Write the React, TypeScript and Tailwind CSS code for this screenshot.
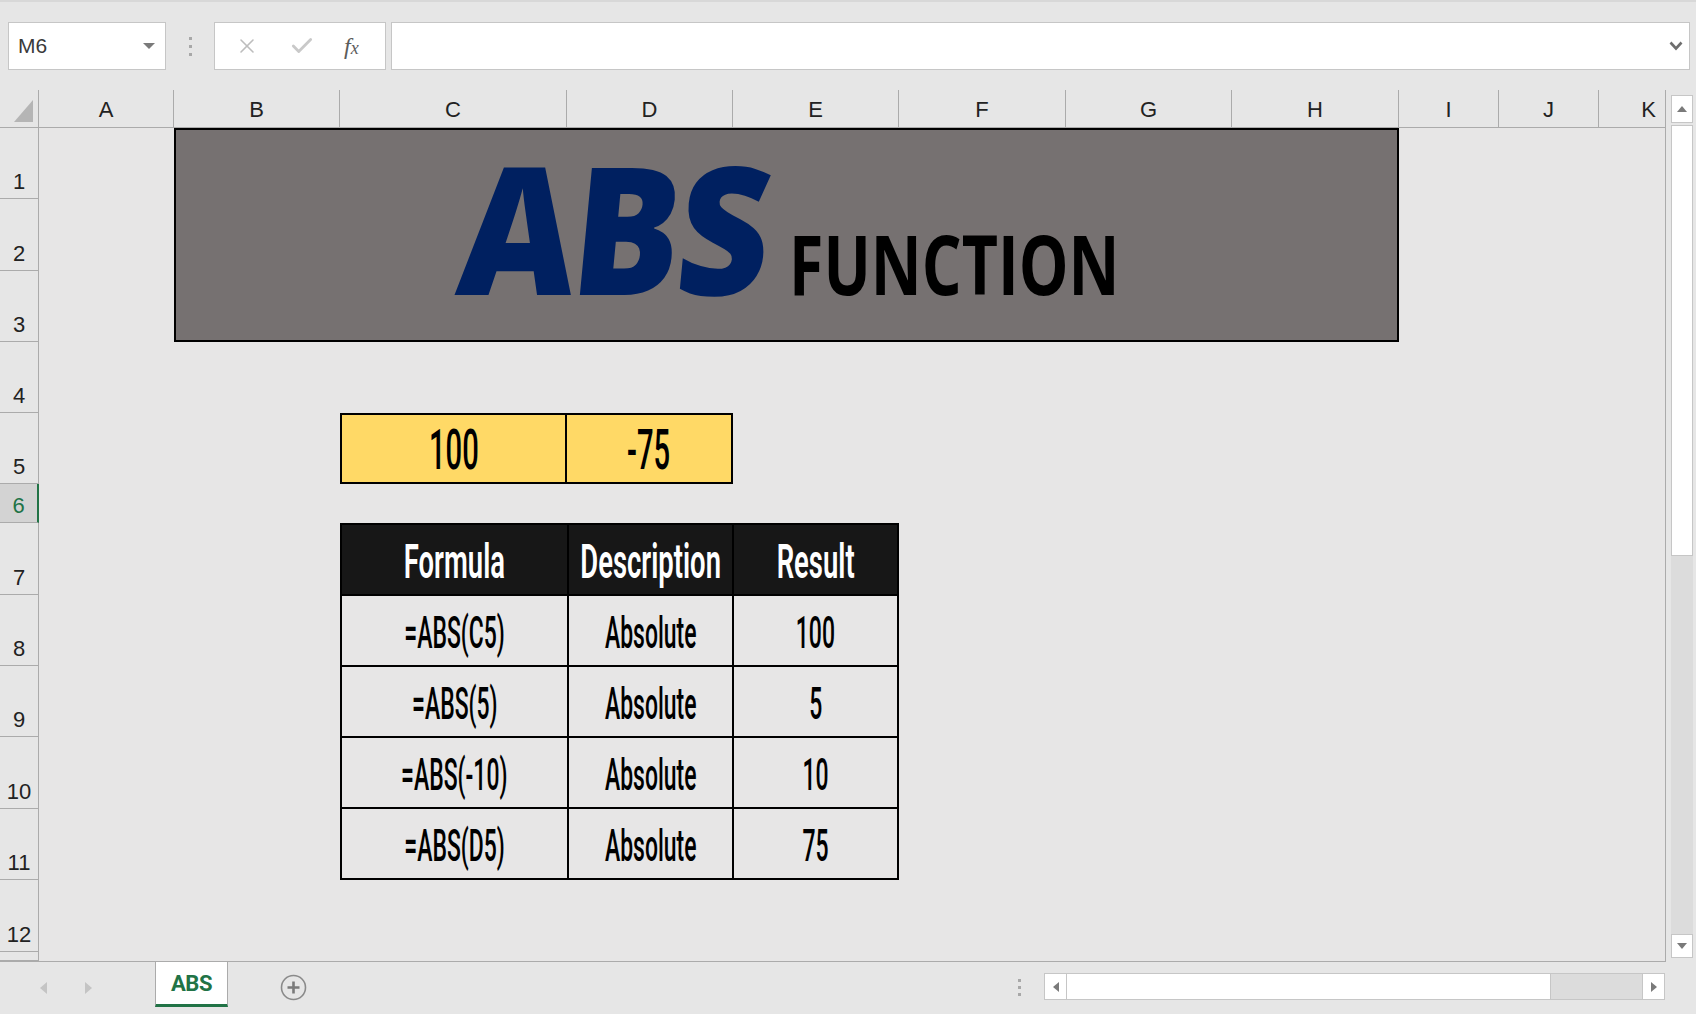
import { X, Check } from "lucide-react";

const COLUMNS = [
  { label: "A", width: "w-[135px]" },
  { label: "B", width: "w-[166px]" },
  { label: "C", width: "w-[227px]" },
  { label: "D", width: "w-[166px]" },
  { label: "E", width: "w-[166px]" },
  { label: "F", width: "w-[167px]" },
  { label: "G", width: "w-[166px]" },
  { label: "H", width: "w-[167px]" },
  { label: "I", width: "w-[100px]" },
  { label: "J", width: "w-[100px]" },
  { label: "K", width: "w-[100px]" },
];

const ROWS = [
  { n: "1", h: "h-[71px]" },
  { n: "2", h: "h-[72px]" },
  { n: "3", h: "h-[71px]" },
  { n: "4", h: "h-[71px]" },
  { n: "5", h: "h-[71px]" },
  { n: "6", h: "h-[39px]", selected: true },
  { n: "7", h: "h-[72px]" },
  { n: "8", h: "h-[71px]" },
  { n: "9", h: "h-[71px]" },
  { n: "10", h: "h-[72px]" },
  { n: "11", h: "h-[71px]" },
  { n: "12", h: "h-[72px]" },
  { n: "", h: "h-[9px]" },
];

const TABLE = [
  ["=ABS(C5)", "Absolute", "100"],
  ["=ABS(5)", "Absolute", "5"],
  ["=ABS(-10)", "Absolute", "10"],
  ["=ABS(D5)", "Absolute", "75"],
];

function Condensed({ children, size }: { children: React.ReactNode; size: "head" | "body" | "big" }) {
  const cls =
    size === "head"
      ? "text-[49px] scale-x-[0.56] font-semibold"
      : size === "big"
      ? "text-[55px] scale-x-[0.53] font-medium"
      : "text-[45px] scale-x-[0.51] font-medium";
  return (
    <span className={`inline-block whitespace-nowrap font-['Roboto',sans-serif] leading-none pt-[3px] ${cls}`}>
      {children}
    </span>
  );
}

function Toolbar() {
  return (
    <div className="flex h-[90px] shrink-0 items-start border-t-2 border-[#d8d8d8] pt-[20px] pl-[8px]">
      {/* name box */}
      <div className="flex h-[48px] w-[158px] items-center justify-between border border-[#c6c6c6] bg-white pl-[9px] pr-[10px]">
        <span className="text-[21px] text-[#3a3a3a]">M6</span>
        <svg width="12" height="7" viewBox="0 0 12 7">
          <path d="M0 0 L12 0 L6 6 Z" fill="#7a7a7a" />
        </svg>
      </div>
      <div className="flex h-[48px] w-[48px] flex-col items-center justify-center gap-[5px]">
        <span className="h-[3px] w-[3px] bg-[#a8a8a8]" />
        <span className="h-[3px] w-[3px] bg-[#a8a8a8]" />
        <span className="h-[3px] w-[3px] bg-[#a8a8a8]" />
      </div>
      {/* cancel / enter / fx */}
      <div className="flex h-[48px] w-[172px] items-center border border-[#c6c6c6] bg-white pl-[20px]">
        <X size={24} strokeWidth={1.6} color="#bdbdbd" />
        <Check size={26} strokeWidth={2.6} color="#c9c9c9" className="ml-[30px]" />
        <span className="ml-[29px] font-['Liberation_Serif',serif] text-[24px] italic text-[#5c5c5c]">
          f<span className="text-[18px]">x</span>
        </span>
      </div>
      {/* formula input */}
      <div className="ml-[5px] flex h-[48px] w-[1299px] items-center justify-end border border-[#c6c6c6] bg-white pr-[6px]">
        <svg width="14" height="10" viewBox="0 0 14 10">
          <path d="M1.5 1.5 L7 7.5 L12.5 1.5" fill="none" stroke="#6e6e6e" strokeWidth="2.6" />
        </svg>
      </div>
    </div>
  );
}

function Sheet() {
  return (
    <div className="flex h-[872px] w-[1666px] shrink-0 flex-col overflow-hidden border-r border-b border-[#ababab]">
      {/* column headers */}
      <div className="flex h-[38px] shrink-0 border-b border-[#ababab]">
        <div className="flex w-[39px] shrink-0 items-end justify-end border-r border-[#ababab] pr-[5px] pb-[5px]">
          <svg width="19" height="22" viewBox="0 0 19 22">
            <path d="M19 0 L19 22 L0 22 Z" fill="#b5b5b5" />
          </svg>
        </div>
        {COLUMNS.map((c) => (
          <div
            key={c.label}
            className={`flex shrink-0 items-center justify-center border-r border-[#ababab] pt-[2px] text-[22px] text-[#222] ${c.width}`}
          >
            {c.label}
          </div>
        ))}
      </div>

      <div className="flex min-h-0 flex-1">
        {/* row headers */}
        <div className="flex w-[39px] shrink-0 flex-col border-r border-[#ababab]">
          {ROWS.map((r, i) => (
            <div
              key={i}
              className={`flex shrink-0 items-end justify-center overflow-hidden border-b pb-[5px] text-[22px] leading-none ${r.h} ${
                r.selected
                  ? "-mr-px border-r-2 border-b-[#ababab] border-r-[#217346] bg-[#d3d3d3] text-[#217346]"
                  : "border-[#ababab] text-[#222]"
              }`}
            >
              {r.n}
            </div>
          ))}
        </div>

        {/* cells */}
        <div className="grid flex-1 grid-cols-[135px_166px_227px_166px_166px_167px_166px_167px_100px_100px_100px] grid-rows-[71px_72px_71px_71px_71px_39px_72px_71px_71px_72px_71px_72px_9px] bg-[#e7e6e6]">
          <div className="col-start-2 col-end-9 row-start-1 row-end-4 flex items-baseline justify-center border-2 border-black bg-[#767171] pt-[7px]">
            <span className="inline-block w-[318px] whitespace-nowrap">
              <span className="inline-block origin-left scale-x-[0.9] -skew-x-[6deg] font-['Open_Sans',sans-serif] text-[178px] font-extrabold leading-none tracking-[-0.02em] text-[#002060]">
                ABS
              </span>
            </span>
            <span className="ml-[10px] inline-block w-[324px] whitespace-nowrap">
              <span className="inline-block origin-left scale-x-[0.755] font-['Open_Sans',sans-serif] text-[83px] font-bold leading-none text-black">
                FUNCTION
              </span>
            </span>
          </div>

          <div className="col-start-3 col-end-5 row-start-5 flex border-2 border-black bg-[#ffd966] text-black">
            <div className="flex w-[225px] items-center justify-center border-r-2 border-black">
              <Condensed size="big">100</Condensed>
            </div>
            <div className="flex flex-1 items-center justify-center">
              <Condensed size="big">-75</Condensed>
            </div>
          </div>

          <div className="col-start-3 col-end-6 row-start-7 row-end-12 grid grid-cols-[225px_163px_163px] grid-rows-5 gap-[2px] border-2 border-black bg-black">
            {["Formula", "Description", "Result"].map((h) => (
              <div key={h} className="flex items-center justify-center bg-[#171717] text-white">
                <Condensed size="head">{h}</Condensed>
              </div>
            ))}
            {TABLE.flat().map((v, i) => (
              <div key={i} className="flex items-center justify-center bg-[#e7e6e6] text-black">
                <Condensed size="body">{v}</Condensed>
              </div>
            ))}
          </div>
        </div>
      </div>
    </div>
  );
}

function VScroll() {
  return (
    <div className="flex w-[30px] shrink-0 flex-col pt-[5px] pb-[4px] pl-[5px]">
      <div className="flex h-[28px] w-[22px] shrink-0 items-center justify-center border border-[#c6c6c6] bg-white">
        <svg width="10" height="6" viewBox="0 0 10 6">
          <path d="M0 6 L10 6 L5 0 Z" fill="#7a7a7a" />
        </svg>
      </div>
      <div className="mt-[2px] h-[431px] w-[22px] shrink-0 border border-[#c6c6c6] bg-white" />
      <div className="w-[22px] flex-1 bg-[#dcdcdc]" />
      <div className="flex h-[24px] w-[22px] shrink-0 items-center justify-center border border-[#c6c6c6] bg-white">
        <svg width="10" height="6" viewBox="0 0 10 6">
          <path d="M0 0 L10 0 L5 6 Z" fill="#7a7a7a" />
        </svg>
      </div>
    </div>
  );
}

function SheetTabs() {
  return (
    <div className="flex h-[52px] shrink-0 items-start">
      <div className="mt-[19px] ml-[40px] flex h-[14px] items-center">
        <svg width="7" height="12" viewBox="0 0 7 12">
          <path d="M7 0 L7 12 L0 6 Z" fill="#c4c4c4" />
        </svg>
        <svg width="7" height="12" viewBox="0 0 7 12" className="ml-[38px]">
          <path d="M0 0 L0 12 L7 6 Z" fill="#c4c4c4" />
        </svg>
      </div>
      <div className="ml-[63px] flex h-[45px] w-[73px] items-center justify-center border-r border-l border-b-[3px] border-r-[#ababab] border-l-[#ababab] border-b-[#217346] bg-white">
        <span className="font-['Roboto',sans-serif] text-[22px] font-bold tracking-[-0.02em] text-[#217346]">ABS</span>
      </div>
      <div className="mt-[12px] ml-[52px]">
        <svg width="27" height="27" viewBox="0 0 27 27">
          <circle cx="13.5" cy="13.5" r="12" fill="none" stroke="#8a8a8a" strokeWidth="1.6" />
          <path d="M13.5 7.5 V19.5 M7.5 13.5 H19.5" stroke="#7a7a7a" strokeWidth="2.6" />
        </svg>
      </div>
      <div className="mt-[17px] ml-[711px] flex flex-col gap-[4px]">
        <span className="h-[3px] w-[3px] bg-[#a8a8a8]" />
        <span className="h-[3px] w-[3px] bg-[#a8a8a8]" />
        <span className="h-[3px] w-[3px] bg-[#a8a8a8]" />
      </div>
      <div className="mt-[11px] ml-[23px] flex h-[27px] w-[621px] border border-[#c6c6c6]">
        <div className="flex w-[22px] items-center justify-center border-r border-[#c6c6c6] bg-white">
          <svg width="6" height="10" viewBox="0 0 6 10">
            <path d="M6 0 L6 10 L0 5 Z" fill="#7a7a7a" />
          </svg>
        </div>
        <div className="w-[484px] border-r border-[#c6c6c6] bg-white" />
        <div className="flex-1 bg-[#dcdcdc]" />
        <div className="flex w-[22px] items-center justify-center border-l border-[#c6c6c6] bg-white">
          <svg width="6" height="10" viewBox="0 0 6 10">
            <path d="M0 0 L0 10 L6 5 Z" fill="#7a7a7a" />
          </svg>
        </div>
      </div>
    </div>
  );
}

export default function App() {
  return (
    <div className="flex h-[1014px] w-[1696px] flex-col overflow-hidden bg-[#e6e6e6] font-['Liberation_Sans',Arial,sans-serif]">
      <Toolbar />
      <div className="flex shrink-0">
        <Sheet />
        <VScroll />
      </div>
      <SheetTabs />
    </div>
  );
}
